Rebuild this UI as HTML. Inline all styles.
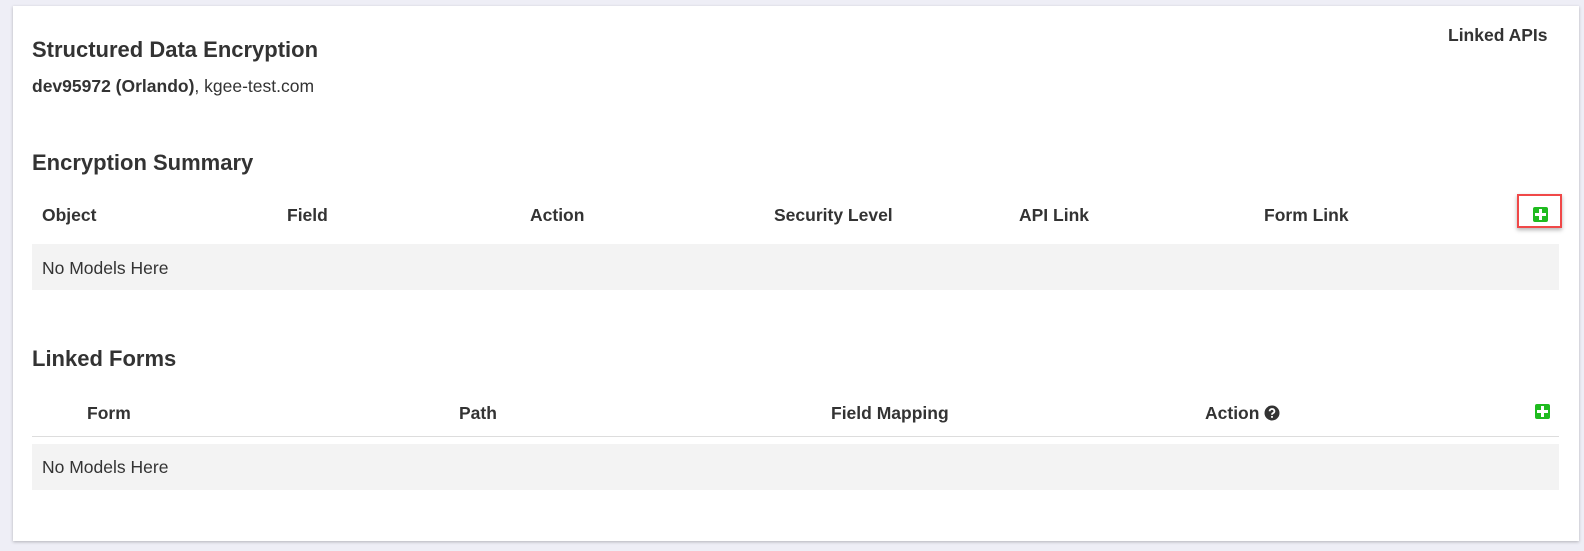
<!DOCTYPE html>
<html><head><meta charset="utf-8"><style>
*{margin:0;padding:0;box-sizing:border-box}
body{width:1584px;height:551px;background:#eeeef6;font-family:"Liberation Sans",Arial,sans-serif;color:#333;position:relative;overflow:hidden}
.card{position:absolute;left:13px;top:6px;width:1566px;height:535px;background:#fff;box-shadow:0 1px 3px rgba(0,0,0,.25)}
.t{position:absolute;white-space:nowrap;line-height:1}
.h1{font-size:22px;font-weight:bold}
.b{font-size:17.5px;font-weight:bold}
.n{font-size:17.5px}
.gray{position:absolute;left:32px;width:1527px;height:46px;background:#f3f3f3}
.plus{position:absolute;width:15px;height:15px;background:#1fbb1f;border-radius:2px}
.plus:before{content:"";position:absolute;left:6px;top:2px;width:3px;height:11px;background:#fff}
.plus:after{content:"";position:absolute;left:2px;top:6px;width:11px;height:3px;background:#fff}
</style></head><body>
<div class="card"></div>
<div class="t h1" style="left:32px;top:39px">Structured Data Encryption</div>
<div class="t n" style="left:32px;top:78px"><b>dev95972 (Orlando)</b>, kgee-test.com</div>
<div class="t b" style="left:1448px;top:27px">Linked APIs</div>

<div class="t h1" style="left:32px;top:152px">Encryption Summary</div>
<div class="t b" style="left:42px;top:207px">Object</div>
<div class="t b" style="left:287px;top:207px">Field</div>
<div class="t b" style="left:530px;top:207px">Action</div>
<div class="t b" style="left:774px;top:207px">Security Level</div>
<div class="t b" style="left:1019px;top:207px">API Link</div>
<div class="t b" style="left:1264px;top:207px">Form Link</div>
<div style="position:absolute;left:1517px;top:194px;width:45px;height:34px;border:2px solid #f04848;box-shadow:0 2px 4px rgba(0,0,0,.3)"></div>
<div class="plus" style="left:1533px;top:207px"></div>
<div class="gray" style="top:244px"></div>
<div class="t n" style="left:42px;top:260px">No Models Here</div>

<div class="t h1" style="left:32px;top:348px">Linked Forms</div>
<div class="t b" style="left:87px;top:405px">Form</div>
<div class="t b" style="left:459px;top:405px">Path</div>
<div class="t b" style="left:831px;top:405px">Field Mapping</div>
<div class="t b" style="left:1205px;top:405px">Action <svg width="16" height="16" viewBox="0 0 16 16" style="vertical-align:-2px"><circle cx="8" cy="8" r="7.5" fill="#333"/><path d="M5.6 6.2a2.4 2.2 0 1 1 3.4 2c-.8.4-1 .8-1 1.6" stroke="#fff" stroke-width="1.8" fill="none"/><rect x="7.1" y="11" width="1.8" height="1.8" fill="#fff"/></svg></div>
<div class="plus" style="left:1535px;top:404px"></div>
<div style="position:absolute;left:32px;top:436px;width:1527px;height:1px;background:#ddd"></div>
<div class="gray" style="top:444px"></div>
<div class="t n" style="left:42px;top:459px">No Models Here</div>
</body></html>
